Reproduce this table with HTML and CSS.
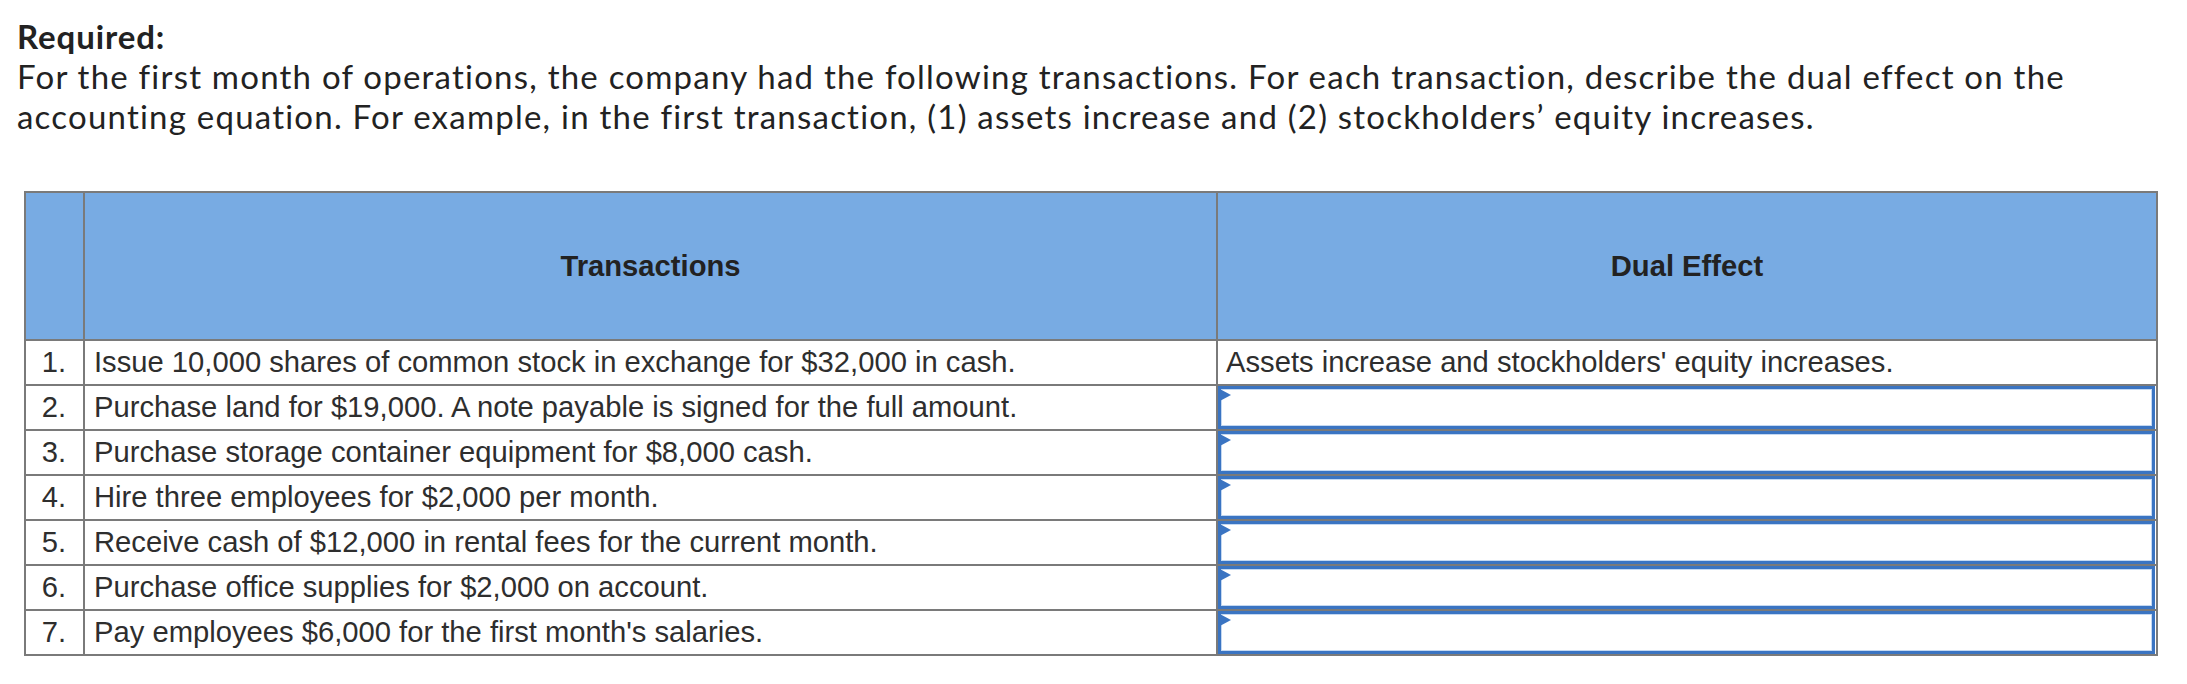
FILE: index.html
```html
<!DOCTYPE html>
<html lang="en">
<head>
<meta charset="utf-8">
<title>Required: Dual effect on the accounting equation</title>
<link rel="stylesheet" href="styles.css">
</head>
<body>
<div class="page">
  <div class="prompt">
    <p class="req">Required:</p>
    <p class="desc">For the first month of operations, the company had the following transactions. For each transaction, describe the dual effect on the<br>accounting equation. For example, in the first transaction, (1) assets increase and (2) stockholders’ equity increases.</p>
  </div>
  <table class="grid">
    <colgroup>
      <col class="c-num">
      <col class="c-trans">
      <col class="c-dual">
    </colgroup>
    <thead>
      <tr><th></th><th>Transactions</th><th>Dual Effect</th></tr>
    </thead>
    <tbody>
      <tr><td class="num">1.</td><td class="trans">Issue 10,000 shares of common stock in exchange for $32,000 in cash.</td><td class="dual">Assets increase and stockholders' equity increases.</td></tr>
      <tr><td class="num">2.</td><td class="trans">Purchase land for $19,000. A note payable is signed for the full amount.</td><td class="answer-cell"><div class="answer"><span class="marker"></span></div></td></tr>
      <tr><td class="num">3.</td><td class="trans">Purchase storage container equipment for $8,000 cash.</td><td class="answer-cell"><div class="answer"><span class="marker"></span></div></td></tr>
      <tr><td class="num">4.</td><td class="trans">Hire three employees for $2,000 per month.</td><td class="answer-cell"><div class="answer"><span class="marker"></span></div></td></tr>
      <tr><td class="num">5.</td><td class="trans">Receive cash of $12,000 in rental fees for the current month.</td><td class="answer-cell"><div class="answer"><span class="marker"></span></div></td></tr>
      <tr><td class="num">6.</td><td class="trans">Purchase office supplies for $2,000 on account.</td><td class="answer-cell"><div class="answer"><span class="marker"></span></div></td></tr>
      <tr><td class="num">7.</td><td class="trans">Pay employees $6,000 for the first month's salaries.</td><td class="answer-cell"><div class="answer"><span class="marker"></span></div></td></tr>
    </tbody>
  </table>
</div>
</body>
</html>
```
FILE: styles.css
```css
html, body {
  margin: 0;
  padding: 0;
  background: #ffffff;
}

.page {
  padding: 16px 0 0 17px;
}

.prompt {
  font-family: Lato, "Open Sans", sans-serif;
  font-size: 33px;
  line-height: 40px;
  letter-spacing: 1.22px;
  color: #222222;
}

.prompt p {
  margin: 0;
}

.req {
  font-weight: 700;
  letter-spacing: 0.9px;
}

.grid {
  margin: 55px 0 0 7px;
  border-collapse: collapse;
  table-layout: fixed;
  width: 2132px;
  font-family: "Liberation Sans", Arial, sans-serif;
  font-size: 29.2px;
}

.c-num { width: 59px; }
.c-trans { width: 1133px; }
.c-dual { width: 940px; }

.grid th,
.grid td {
  border: 2px solid #7a7a7a;
  padding: 0;
}

.grid thead th {
  height: 146px;
  background: #78abe3;
  color: #222222;
  font-weight: 700;
  text-align: center;
  vertical-align: middle;
}

.grid tbody td {
  height: 43px;
  color: #2e2e2e;
  vertical-align: middle;
  white-space: nowrap;
}

.num {
  text-align: right;
  padding-right: 17px !important;
}

.trans {
  padding-left: 9px !important;
}

.dual {
  padding-left: 8px !important;
}

.answer {
  position: relative;
  box-sizing: border-box;
  height: 43px;
  margin-right: 1px;
  border: 3px solid #3a74c2;
  box-shadow: inset 0 0 0 1px #c4d8f1;
  background: #ffffff;
}

.marker {
  position: absolute;
  left: -3px;
  top: -1px;
  width: 0;
  height: 0;
  border-left: 13px solid #3a74c2;
  border-top: 7px solid transparent;
  border-bottom: 7px solid transparent;
}
```
